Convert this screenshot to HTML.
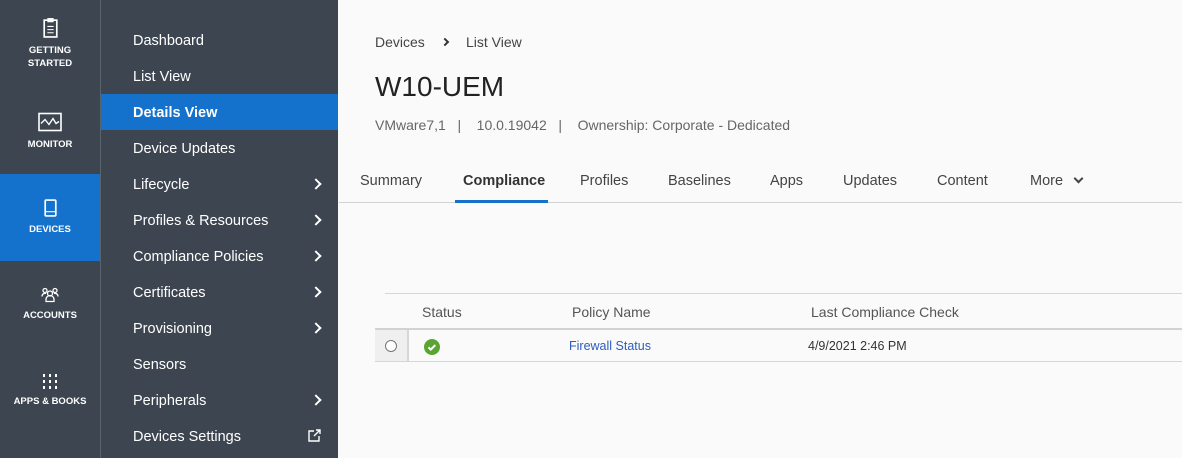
<!DOCTYPE html><html><head><style>
*{margin:0;padding:0;box-sizing:border-box}
body{width:1182px;height:458px;overflow:hidden;background:#fafafa;font-family:"Liberation Sans",sans-serif;position:relative}
.rail{position:absolute;left:0;top:0;width:100px;height:458px;background:#3c4550}
.rail .it{position:absolute;left:0;width:100px;text-align:center;color:#fff;font-size:9.5px;font-weight:bold;line-height:13px}
.rail .it svg{display:block;margin:0 auto 6px}
.sep{position:absolute;left:100px;top:0;width:1px;height:458px;background:#5a626c}
.sub{position:absolute;left:101px;top:0;width:237px;height:458px;background:#3c4550}
.sub div{position:absolute;left:0;width:237px;height:36px;line-height:38px;padding-left:32px;color:#fff;font-size:14.5px}
.sub .act{background:#1572cc;font-weight:bold}
.chev{position:absolute;right:18px;top:14px;width:8px;height:8px;border-right:2px solid #fff;border-top:2px solid #fff;transform:rotate(45deg)}
.t{position:absolute;color:#333;white-space:nowrap}
.tab{position:absolute;top:173px;font-size:14.5px;color:#444;white-space:nowrap}
</style></head><body>
<div class="rail">
 <div class="it" style="top:17px"><svg width="17" height="21" viewBox="0 0 16 20"><rect x="2" y="3" width="12" height="16" fill="none" stroke="#fff" stroke-width="1.6"/><rect x="5" y="1" width="6" height="4" fill="#fff"/><path d="M5 9h6M5 12h6M5 15h6" stroke="#fff"/></svg>GETTING<br>STARTED</div>
 <div class="it" style="top:112px"><svg width="24" height="20" viewBox="0 0 24 19"><rect x="1" y="1" width="22" height="17" fill="none" stroke="#fff" stroke-width="1.6"/><path d="M3 11l4-4 4 5 4-6 3 5 3-2" fill="none" stroke="#fff" stroke-width="1.4"/></svg>MONITOR</div>
 <div style="position:absolute;top:174px;left:0;width:100px;height:87px;background:#1572cc"></div>
 <div class="it" style="top:199px"><svg width="13" height="18" viewBox="0 0 12 17"><rect x="1" y="1" width="10" height="15" rx="1" fill="none" stroke="#fff" stroke-width="1.6"/><path d="M1 12h10" stroke="#fff"/></svg>DEVICES</div>
 <div class="it" style="top:286px"><svg width="18" height="17" viewBox="0 0 18 16"><circle cx="9" cy="7" r="2.5" fill="none" stroke="#fff" stroke-width="1.3"/><circle cx="4" cy="4" r="2" fill="none" stroke="#fff" stroke-width="1.3"/><circle cx="14" cy="4" r="2" fill="none" stroke="#fff" stroke-width="1.3"/><path d="M5 15v-2a4 4 0 0 1 8 0v2zM1 10a3 3 0 0 1 4-3M17 10a3 3 0 0 0-4-3" fill="none" stroke="#fff" stroke-width="1.3"/></svg>ACCOUNTS</div>
 <div class="it" style="top:373px"><svg width="16" height="16" viewBox="0 0 16 16" fill="#fff"><rect x="1" y="1" width="2" height="3"/><rect x="7" y="1" width="2" height="3"/><rect x="13" y="1" width="2" height="3"/><rect x="1" y="7" width="2" height="3"/><rect x="7" y="7" width="2" height="3"/><rect x="13" y="7" width="2" height="3"/><rect x="1" y="13" width="2" height="3"/><rect x="7" y="13" width="2" height="3"/><rect x="13" y="13" width="2" height="3"/></svg>APPS &amp; BOOKS</div>
</div>
<div class="sep"></div>
<div class="sub">
 <div style="top:22px">Dashboard</div>
 <div style="top:58px">List View</div>
 <div class="act" style="top:94px">Details View</div>
 <div style="top:130px">Device Updates</div>
 <div style="top:166px">Lifecycle<span class="chev"></span></div>
 <div style="top:202px">Profiles &amp; Resources<span class="chev"></span></div>
 <div style="top:238px">Compliance Policies<span class="chev"></span></div>
 <div style="top:274px">Certificates<span class="chev"></span></div>
 <div style="top:310px">Provisioning<span class="chev"></span></div>
 <div style="top:346px">Sensors</div>
 <div style="top:382px">Peripherals<span class="chev"></span></div>
 <div style="top:418px">Devices Settings<svg style="position:absolute;right:17px;top:11px" width="13" height="13" viewBox="0 0 13 13"><path d="M6 2H1v10h10V7M8 1h4v4M12 1L6 7" fill="none" stroke="#fff" stroke-width="1.4"/></svg></div>
</div>
<div class="t" style="left:375px;top:34px;font-size:14px;color:#444">Devices</div>
<div style="position:absolute;left:442px;top:39px;width:6px;height:6px;border-right:2px solid #333;border-top:2px solid #333;transform:rotate(45deg)"></div>
<div class="t" style="left:466px;top:34px;font-size:14px;color:#444">List View</div>
<div class="t" style="left:375px;top:71px;font-size:28px;color:#222">W10-UEM</div>
<div class="t" style="left:375px;top:117px;font-size:14px;color:#666">VMware7,1 &nbsp;&nbsp;|&nbsp;&nbsp;&nbsp; 10.0.19042 &nbsp;&nbsp;|&nbsp;&nbsp;&nbsp; Ownership: Corporate - Dedicated</div>
<div class="tab" style="left:360px">Summary</div>
<div class="tab" style="left:463px;color:#333;font-weight:bold">Compliance</div>
<div class="tab" style="left:580px">Profiles</div>
<div class="tab" style="left:668px">Baselines</div>
<div class="tab" style="left:770px">Apps</div>
<div class="tab" style="left:843px">Updates</div>
<div class="tab" style="left:937px">Content</div>
<div class="tab" style="left:1030px">More</div>
<div style="position:absolute;left:1075px;top:175px;width:7px;height:7px;border-right:2px solid #444;border-bottom:2px solid #444;transform:rotate(45deg)"></div>
<div style="position:absolute;left:339px;top:202px;width:843px;height:1px;background:#cfd3d6"></div>
<div style="position:absolute;left:455px;top:200px;width:93px;height:3px;background:#1572cc"></div>
<div style="position:absolute;left:385px;top:293px;width:797px;height:1px;background:#d4d7d9"></div>
<div class="t" style="left:422px;top:304px;font-size:14px;color:#555">Status</div>
<div class="t" style="left:572px;top:304px;font-size:14px;color:#555">Policy Name</div>
<div class="t" style="left:811px;top:304px;font-size:14px;color:#555">Last Compliance Check</div>
<div style="position:absolute;left:375px;top:328px;width:807px;height:2px;background:#cfd3d6"></div>
<div style="position:absolute;left:375px;top:330px;width:34px;height:31px;background:#efefef;border-right:2px solid #d4d7d9"></div>
<div style="position:absolute;left:385px;top:340px;width:12px;height:12px;border:1px solid #777;border-radius:50%;background:#fff"></div>
<div style="position:absolute;left:375px;top:361px;width:807px;height:1px;background:#d4d7d9"></div>
<svg style="position:absolute;left:424px;top:339px" width="16" height="16" viewBox="0 0 16 16"><circle cx="8" cy="8" r="8" fill="#5aa532"/><path d="M4.5 8.3l2.3 2.3 4.5-4.5" fill="none" stroke="#fff" stroke-width="2"/></svg>
<div class="t" style="left:569px;top:339px;font-size:12.5px;color:#2c5dbd">Firewall Status</div>
<div class="t" style="left:808px;top:339px;font-size:12.5px;color:#333">4/9/2021 2:46 PM</div>
</body></html>
